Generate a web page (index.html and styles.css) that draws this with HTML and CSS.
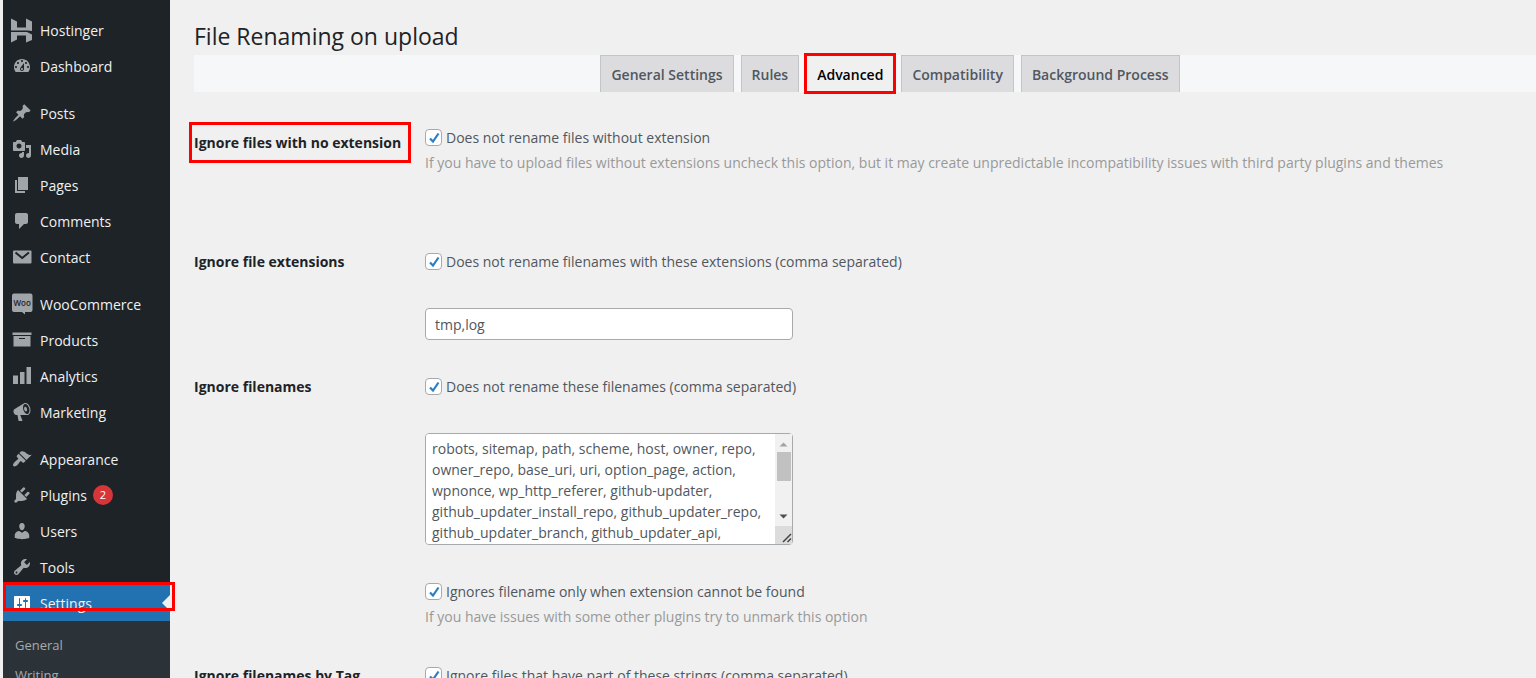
FILE: index.html
```html
<!DOCTYPE html>
<html lang="en">
<head>
  <meta charset="UTF-8" />
  <meta name="viewport" content="width=device-width, initial-scale=1" />
  <title>File Renaming on upload</title>
  <link rel="stylesheet" href="styles.css">
</head>
<body>
  <div class="layout">
    <nav class="sidebar">
      <ul class="menu">
        <li><a href="#"><svg class="icon" viewBox="0 0 20 20"><path d="M-1-1.500L5 1.500v6h9V-1.500l6 3v9.500l-4-.5H-1zM-1 12h16l5 2.500v5.500l-6 2.500v-7H5v4l-6 3z"/></svg>Hostinger</a></li>
        <li><a href="#"><svg class="icon" viewBox="0 0 20 20"><path fill-rule="evenodd" d="M3.760 16h12.480c1.100-1.370 1.760-3.110 1.760-5 0-4.420-3.580-8-8-8s-8 3.580-8 8c0 1.890.66 3.630 1.760 5zM10 4c.55 0 1 .45 1 1s-.45 1-1 1-1-.45-1-1 .45-1 1-1zM6 6c.55 0 1 .45 1 1s-.45 1-1 1-1-.45-1-1 .45-1 1-1zm8 0c.55 0 1 .45 1 1s-.45 1-1 1-1-.45-1-1 .45-1 1-1zm-5.370 5.550L12 7v6c0 1.100-.9 2-2 2s-2-.9-2-2c0-.57.24-1.080.63-1.450zM4 10c.55 0 1 .45 1 1s-.45 1-1 1-1-.45-1-1 .45-1 1-1zm12 0c.55 0 1 .45 1 1s-.45 1-1 1-1-.45-1-1 .45-1 1-1zm-5 3c0-.55-.45-1-1-1s-1 .45-1 1 .45 1 1 1 1-.45 1-1z"/></svg>Dashboard</a></li>
      </ul>
      <ul class="menu">
        <li><a href="#"><svg class="icon" viewBox="0 0 20 20"><path d="M10.440 3.020l1.820-1.820 6.360 6.350-1.830 1.820c-1.050-.68-2.480-.57-3.410.36l-.75.75c-.92.93-1.040 2.350-.35 3.410l-1.830 1.820-2.410-2.410-2.800 2.790c-.42.42-3.380 2.710-3.800 2.290s1.860-3.390 2.280-3.810l2.790-2.790L4.100 9.360l1.830-1.820c1.050.69 2.480.57 3.400-.36l.75-.75c.93-.92 1.050-2.350.36-3.410z"/></svg>Posts</a></li>
        <li><a href="#"><svg class="icon" viewBox="0 0 20 20"><path fill-rule="evenodd" d="M13 11V4c0-.55-.45-1-1-1h-1.670L9 1H5L3.670 3H2c-.55 0-1 .45-1 1v7c0 .55.45 1 1 1h10c.55 0 1-.45 1-1zM7 4.500c1.380 0 2.500 1.120 2.500 2.500S8.380 9.500 7 9.500 4.500 8.380 4.500 7 5.620 4.500 7 4.500zM14 6h5v10.500c0 1.380-1.120 2.500-2.500 2.500S14 17.880 14 16.500s1.120-2.500 2.500-2.500c.17 0 .34.02.5.05V9h-3V6zm-4 8.050V13h2v3.500c0 1.380-1.120 2.500-2.500 2.500S7 17.880 7 16.500 8.120 14 9.500 14c.17 0 .34.02.5.05z"/></svg>Media</a></li>
        <li><a href="#"><svg class="icon" viewBox="0 0 20 20"><path d="M6 15V2h10v13H6zm-1 1h8v2H3V5h2v11z"/></svg>Pages</a></li>
        <li><a href="#"><svg class="icon" viewBox="0 0 20 20"><path d="M5 2h9c1.100 0 2 .9 2 2v7c0 1.100-.9 2-2 2h-2l-5 5v-5H5c-1.100 0-2-.9-2-2V4c0-1.100.9-2 2-2z"/></svg>Comments</a></li>
        <li><a href="#"><svg class="icon" viewBox="0 0 20 20"><rect x="1" y="3.500" width="18.500" height="13" rx="1"/><path class="cut" d="M3.500 5.500l6.700 5.500 6.700-5.500"/></svg>Contact</a></li>
      </ul>
      <ul class="menu">
        <li><a href="#"><svg class="icon" viewBox="0 0 20 20"><path d="M2-.5h16.500a2 2 0 012 2V16a2 2 0 01-2 2H13v2.500L10 18H2a2 2 0 01-2-2V1.500a2 2 0 012-2z"/><text class="woo" x="10.200" y="11.500">Woo</text></svg>WooCommerce</a></li>
        <li><a href="#"><svg class="icon" viewBox="0 0 20 20"><path fill-rule="evenodd" d="M.5 2.500h19V5H.5zM1.500 6h17v10.500h-17zM13 9V8H7v1z"/></svg>Products</a></li>
        <li><a href="#"><svg class="icon" viewBox="0 0 20 20"><path d="M19 18V1h-4.500v17zm-6.500 0V6H8v12zM6 18V9.500H1V18z"/></svg>Analytics</a></li>
        <li><a href="#"><svg class="icon" viewBox="0 0 20 20"><path fill-rule="evenodd" d="M18.150 5.940c.46 1.620.38 3.220-.02 4.480-.42 1.280-1.260 2.180-2.300 2.480-.16.060-.26.060-.4.060-.06.020-.12.020-.18.020-.06.020-.14.020-.22.020h-6.800l2.220 5.500c.02.140-.06.260-.14.340-.08.100-.24.160-.34.160H6.950c-.1 0-.26-.06-.34-.16-.08-.08-.16-.2-.14-.34l-1-5.500H4.250l-.02-.02c-.5.060-1.080-.18-1.540-.62s-.88-1.080-1.060-1.880c-.24-.8-.2-1.560-.02-2.200.18-.62.58-1.080 1.060-1.300l.02-.02 9-5.400c.1-.06.18-.1.24-.16.06-.04.14-.08.24-.12.16-.08.28-.12.5-.18 1.040-.3 2.240.1 3.220.98s1.840 2.240 2.260 3.860zm-2.580 5.980h-.02c.4-.1.740-.34 1.040-.7.580-.7.860-1.760.86-3.040 0-.64-.1-1.300-.28-1.980-.34-1.360-1.020-2.500-1.780-3.240s-1.680-1.100-2.460-.88c-.82.220-1.400.960-1.700 2-.32 1.040-.28 2.360.06 3.720.38 1.360 1 2.500 1.800 3.240.78.740 1.620 1.100 2.480.88zm-2.540-7.080c.22-.04.42-.02.62.04.38.160.76.480 1.020 1s.42 1.200.42 1.780c0 .3-.04.560-.12.8-.18.480-.44.840-.86.940-.34.100-.8-.06-1.140-.4s-.64-.86-.78-1.500c-.18-.62-.12-1.240.02-1.720s.48-.84.82-.94z"/></svg>Marketing</a></li>
      </ul>
      <ul class="menu">
        <li><a href="#"><svg class="icon" viewBox="0 0 20 20"><path d="M14.480 11.060L7.410 3.990l1.500-1.500c.5-.56 2.300-.47 3.510.32 1.210.8 1.430 1.280 2.910 2.100 1.180.64 2.450 1.260 4.450.85zm-.71.710L6.700 4.700 4.930 6.470c-.39.39-.39 1.020 0 1.410l1.060 1.060c.39.39.39 1.030 0 1.420-.6.6-1.430 1.110-2.210 1.690-.35.26-.7.53-1.010.84C1.430 14.230.4 16.080 1.400 17.070c.99 1 2.840-.03 4.180-1.360.31-.31.58-.66.85-1.020.57-.78 1.080-1.610 1.690-2.210.39-.39 1.020-.39 1.410 0l1.060 1.060c.39.39 1.020.39 1.410 0z"/></svg>Appearance</a></li>
        <li><a href="#"><svg class="icon" viewBox="0 0 20 20"><path d="M13.110 4.360L9.870 7.600 8 5.730l3.240-3.240c.35-.34 1.050-.2 1.560.32.52.51.66 1.210.31 1.550zm-8 1.770l.91-1.120 9.010 9.010-1.190.84c-.71.71-2.630 1.160-3.820 1.160H6.140L4.900 17.260c-.59.59-1.540.59-2.120 0-.59-.58-.59-1.530 0-2.120l1.240-1.240v-3.880c0-1.130.4-3.190 1.090-3.890zm7.260 3.970l3.240-3.240c.34-.35 1.040-.21 1.550.31.52.51.66 1.210.31 1.550l-3.240 3.250z"/></svg>Plugins <span class="count">2</span></a></li>
        <li><a href="#"><svg class="icon" viewBox="0 0 20 20"><path d="M10 9.250c-2.270 0-2.730-3.440-2.730-3.440C7 4.020 7.820 2 9.970 2c2.160 0 2.980 2.020 2.710 3.810 0 0-.41 3.440-2.680 3.440zm0 2.570L12.720 10c2.390 0 4.520 2.330 4.520 4.530v2.490s-3.650 1.130-7.240 1.130c-3.650 0-7.240-1.130-7.240-1.130v-2.490c0-2.250 1.940-4.480 4.470-4.480z"/></svg>Users</a></li>
        <li><a href="#"><svg class="icon" viewBox="0 0 20 20"><path fill-rule="evenodd" d="M16.680 9.770c-1.340 1.340-3.300 1.670-4.950.99l-5.410 6.520c-.99.99-2.590.99-3.580 0s-.99-2.590 0-3.570l6.520-5.420c-.68-1.650-.35-3.610.99-4.950 1.280-1.280 3.120-1.620 4.720-1.060l-2.890 2.890 2.820 2.820 2.860-2.870c.53 1.580.18 3.390-1.080 4.650zM3.810 16.210c.4.39 1.040.39 1.430 0 .4-.4.4-1.040 0-1.430-.39-.4-1.030-.4-1.430 0-.39.39-.39 1.030 0 1.430z"/></svg>Tools</a></li>
        <li class="current"><a href="#"><svg class="icon" viewBox="0 0 20 20"><path fill-rule="evenodd" d="M18 16V4c0-.55-.45-1-1-1H3c-.55 0-1 .45-1 1v12c0 .55.45 1 1 1h14c.55 0 1-.45 1-1zM8 11h1c.55 0 1 .45 1 1s-.45 1-1 1H8v1.500c0 .28-.22.5-.5.5s-.5-.22-.5-.5V13H6c-.55 0-1-.45-1-1s.45-1 1-1h1V5.500c0-.28.22-.5.5-.5s.5.22.5.5V11zm5-2h-1c-.55 0-1-.45-1-1s.45-1 1-1h1V5.500c0-.28.22-.5.5-.5s.5.22.5.5V7h1c.55 0 1 .45 1 1s-.45 1-1 1h-1v5.500c0 .28-.22.5-.5.5s-.5-.22-.5-.5V9z"/></svg>Settings</a></li>
      </ul>
      <ul class="submenu">
        <li><a href="#">General</a></li>
        <li><a href="#">Writing</a></li>
      </ul>
    </nav>

    <main class="content">
      <h1>File Renaming on upload</h1>

      <div class="tabs">
        <a class="tab" href="#">General Settings</a>
        <a class="tab" href="#">Rules</a>
        <a class="tab active" href="#">Advanced</a>
        <a class="tab" href="#">Compatibility</a>
        <a class="tab" href="#">Background Process</a>
      </div>

      <form class="form">
        <div class="row row-first">
          <h2><span class="marked">Ignore files with no extension</span></h2>
          <div class="field">
            <label><input type="checkbox" name="no_ext" checked />Does not rename files without extension</label>
            <p>If you have to upload files without extensions uncheck this option, but it may create unpredictable incompatibility issues with third party plugins and themes</p>
          </div>
        </div>

        <div class="row">
          <h2>Ignore file extensions</h2>
          <div class="field">
            <label><input type="checkbox" name="ignore_ext" checked />Does not rename filenames with these extensions (comma separated)</label>
            <input class="text" type="text" name="extensions" value="tmp,log" aria-label="Ignored extensions" />
          </div>
        </div>

        <div class="row">
          <h2>Ignore filenames</h2>
          <div class="field">
            <label><input type="checkbox" name="ignore_names" checked />Does not rename these filenames (comma separated)</label>
            <div class="area">
              <textarea class="text" name="filenames" aria-label="Ignored filenames" spellcheck="false">robots, sitemap, path, scheme, host, owner, repo, owner_repo, base_uri, uri, option_page, action, wpnonce, wp_http_referer, github-updater, github_updater_install_repo, github_updater_repo, github_updater_branch, github_updater_api,</textarea>
              <svg class="scrollbar" viewBox="0 0 17 110" aria-hidden="true">
                <path fill="#f1f1f1" d="M0 0h17v110H0z"/>
                <path fill="#a3a3a3" d="M4.500 12.500l4-4 4 4z"/>
                <path fill="#c1c1c1" d="M2 18h14v29H2z"/>
                <path fill="#505050" d="M4.500 80.500h8l-4 4z"/>
                <path fill="#dcdcdc" d="M0 92h17v18H0z"/>
                <path fill="none" stroke="#444" stroke-width="1.500" d="M8 108l8-8M12.500 108l3.500-3.500"/>
              </svg>
            </div>
            <label><input type="checkbox" name="only_no_ext" checked />Ignores filename only when extension cannot be found</label>
            <p>If you have issues with some other plugins try to unmark this option</p>
          </div>
        </div>

        <div class="row">
          <h2>Ignore filenames by Tag</h2>
          <div class="field">
            <label><input type="checkbox" name="ignore_tags" checked />Ignore files that have part of these strings (comma separated)</label>
          </div>
        </div>
      </form>
    </main>
  </div>
</body>
</html>
```
FILE: styles.css
```css
*,
*::before,
*::after {
  box-sizing: border-box;
}

body {
  margin: 0;
  background: #f0f0f0;
  color: #50575e;
  font-family: 'Segoe UI', 'Open Sans', 'Noto Sans', sans-serif;
  font-size: 14px;
}

a {
  color: inherit;
  text-decoration: none;
}

.layout {
  display: flex;
  height: 100vh;
  overflow: hidden;
}

/* Sidebar */

.sidebar {
  flex: none;
  width: 167px;
  margin-left: 3px;
  padding-top: 12px;
  background: #1d2327;
}

.menu,
.submenu {
  list-style: none;
  margin: 0;
  padding: 0;
}

.menu + .menu {
  margin-top: 11px;
}

.menu li {
  position: relative;
}

.menu a {
  display: flex;
  align-items: center;
  height: 36px;
  padding-left: 9px;
  color: #f0f0f1;
}

.icon {
  width: 20px;
  height: 20px;
  margin-right: 8px;
  fill: #a0a5aa;
  overflow: visible;
}

.icon .cut {
  fill: none;
  stroke: #1d2327;
  stroke-width: 2;
}

.icon .woo {
  fill: #1d2327;
  font-size: 8px;
  font-weight: 600;
  text-anchor: middle;
}

.count {
  width: 20px;
  margin-left: 6px;
  border-radius: 10px;
  background: #d63638;
  color: #fff;
  font-size: 11px;
  line-height: 20px;
  text-align: center;
}

.menu .current {
  background: #2271b1;
}

.current .icon {
  fill: #fff;
}

.current::before {
  content: "";
  position: absolute;
  top: 10px;
  right: 0;
  border: 8px solid transparent;
  border-left: 0;
  border-right-color: #f0f0f0;
}

.current::after {
  content: "";
  position: absolute;
  top: -3px;
  left: 0;
  right: -5px;
  height: 29px;
  border: 3px solid #fe0000;
}

.submenu {
  height: 100%;
  padding: 9px 12px;
  background: #2c3338;
  color: #a7aaad;
  font-size: 13px;
}

.submenu a {
  display: block;
  line-height: 30px;
}

/* Content */

.content {
  flex: 1;
  min-width: 0;
  padding: 18px 0 0 24px;
}

h1 {
  margin: 0;
  color: #1d2327;
  font-size: 23px;
  font-weight: 400;
  line-height: 37px;
}

.tabs {
  display: flex;
  justify-content: center;
  gap: 7px;
  margin-right: -50px;
  background: #f6f7f9;
}

.tab {
  padding: 1px 10px 0;
  border: 1px solid #c3c4c7;
  border-bottom: 0;
  background: #dcdcde;
  font-weight: 600;
  line-height: 35px;
}

.tab.active {
  border-color: #f0f0f0;
  background: #f0f0f0;
  color: #000;
  outline: 3px solid #fe0000;
  outline-offset: -1px;
}

.form {
  padding-top: 33px;
}

.row {
  display: grid;
  grid-template-columns: 231px 1fr;
  padding-bottom: 34px;
}

.row-first {
  padding-bottom: 74px;
}

h2 {
  margin: 0;
  color: #1d2327;
  font-size: 14px;
  font-weight: 700;
  line-height: 25px;
}

.marked {
  display: inline-block;
  margin-left: -5px;
  padding: 5px 7px 5px 2px;
  border: 3px solid #fe0000;
}

.row-first h2 {
  margin-top: -3px;
}

.field label {
  display: flex;
  align-items: center;
  line-height: 25px;
}

.field p {
  margin: 0;
  color: #999;
  line-height: 25px;
}

input[type="checkbox"] {
  appearance: none;
  width: 17px;
  height: 17px;
  margin: 0 4px 0 0;
  border: 1px solid #a7aaad;
  border-radius: 4px;
  background: #fff url("data:image/svg+xml,%3Csvg xmlns='http://www.w3.org/2000/svg' viewBox='0 0 14 14'%3E%3Cpath d='M3 7.500l3 3 5.500-8' fill='none' stroke='%232b7fc4' stroke-width='2.200'/%3E%3C/svg%3E") center / 14px no-repeat;
}

.text {
  display: block;
  width: 100%;
  border: 1px solid #a7aaad;
  border-radius: 4px;
  background: #fff;
  color: #50575e;
  font-family: inherit;
  font-size: 14px;
}

input.text {
  max-width: 368px;
  height: 32px;
  margin-top: 34px;
  padding: 0 9px;
}

.area {
  position: relative;
  max-width: 368px;
  margin: 34px 0;
}

textarea.text {
  height: 112px;
  padding: 4px 24px 4px 6px;
  line-height: 21px;
}

.scrollbar {
  position: absolute;
  top: 1px;
  right: 1px;
  width: 17px;
  height: 110px;
}
```
